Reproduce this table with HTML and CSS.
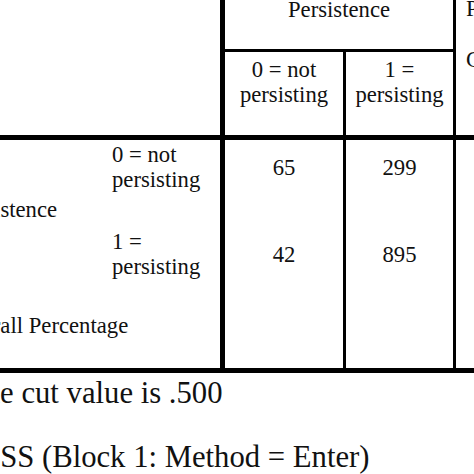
FILE: index.html
```html
<!DOCTYPE html>
<html>
<head>
<meta charset="utf-8">
<link rel="stylesheet" href="styles.css">
</head>
<body>
<div class="page">
  <div class="table">
    <div class="stub-head"></div>
    <div class="grp-head">Persistence</div>
    <div class="pc-head">
      <div class="pc1">Percentage</div>
      <div class="pc2">Correct</div>
    </div>
    <div class="sub sub-c">0 = not<br>persisting</div>
    <div class="sub sub-d">1 =<br>persisting</div>

    <div class="obs">Persistence</div>
    <div class="lbl lbl-r3">0 = not<br>persisting</div>
    <div class="num num-r3 col-c">65</div>
    <div class="num num-r3 col-d">299</div>
    <div class="pc-cell"></div>

    <div class="lbl lbl-r4">1 =<br>persisting</div>
    <div class="num num-r4 col-c">42</div>
    <div class="num num-r4 col-d">895</div>
    <div class="pc-cell"></div>

    <div class="overall">Overall Percentage</div>
    <div class="num last col-c"></div>
    <div class="num last col-d"></div>
    <div class="pc-cell last"></div>
  </div>
  <div class="note note1">The cut value is .500</div>
  <div class="note note2">SPSS (Block 1: Method = Enter)</div>
</div>
</body>
</html>
```
FILE: styles.css
```css
html, body {
  margin: 0;
  padding: 0;
  background: #ffffff;
}

.page {
  width: 474px;
  height: 474px;
  overflow: hidden;
  font-family: "Liberation Serif", "Times New Roman", serif;
  color: #111;
}

.table {
  display: grid;
  grid-template-columns: 157px 118px 121px 110px 60px;
  grid-template-rows: 52px 88px 88px 85px 60px;
  margin-left: -50px;
  font-size: 22.7px;
  line-height: 25px;
}

.table > div {
  box-sizing: border-box;
}

.stub-head {
  grid-column: 1 / 3;
  grid-row: 1 / 3;
  border-right: 5px solid #000;
  border-bottom: 5px solid #000;
}

.grp-head {
  grid-column: 3 / 5;
  grid-row: 1;
  border-right: 3px solid #000;
  border-bottom: 3px solid #000;
  text-align: center;
  line-height: 17px;
  padding-top: 1px;
}

.pc-head {
  grid-column: 5;
  grid-row: 1 / 3;
  border-bottom: 5px solid #000;
  padding-left: 10px;
  white-space: nowrap;
  line-height: 17px;
}

.pc2 {
  margin-top: 34px;
}

.sub {
  grid-row: 2;
  border-right: 3px solid #000;
  border-bottom: 5px solid #000;
  text-align: center;
  padding-top: 5px;
}

.sub-c { grid-column: 3; }
.sub-d { grid-column: 4; }

.obs {
  grid-column: 1;
  grid-row: 3 / 5;
  padding-left: 5px;
  padding-top: 57px;
}

.lbl {
  grid-column: 2;
  border-right: 5px solid #000;
  padding-left: 5px;
}

.lbl-r3 { grid-row: 3; padding-top: 2px; }
.lbl-r4 { grid-row: 4; padding-top: 1px; }

.num {
  border-right: 3px solid #000;
  text-align: center;
}

.col-c { grid-column: 3; }
.col-d { grid-column: 4; }

.num-r3 { grid-row: 3; padding-top: 15px; }
.num-r4 { grid-row: 4; padding-top: 14px; }

.pc-cell {
  grid-column: 5;
}

.overall {
  grid-column: 1 / 3;
  grid-row: 5;
  padding-left: 5px;
  border-right: 5px solid #000;
  border-bottom: 5px solid #000;
  white-space: nowrap;
}

.last {
  grid-row: 5;
  border-bottom: 5px solid #000;
}

.note {
  font-size: 30.7px;
  line-height: 34px;
  margin-left: -34px;
  white-space: nowrap;
}

.note1 {
  margin-top: 3px;
}

.note2 {
  margin-top: 30px;
}
```
